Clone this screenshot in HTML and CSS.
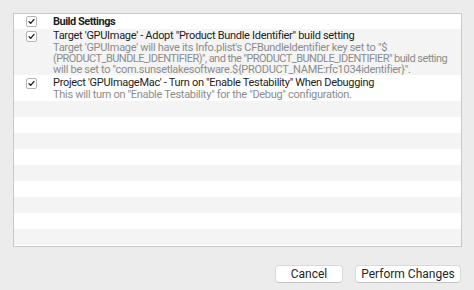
FILE: index.html
```html
<!DOCTYPE html>
<html>
<head>
<meta charset="utf-8">
<link rel="stylesheet" href="styles.css">
</head>
<body>
<div class="dialog">
  <div class="table">
    <div class="row row-header">
      <span class="check"><svg viewBox="0 0 11 11" width="11" height="11"><path d="M3 5.6 L4.7 7.4 L8 3.4" fill="none" stroke="#1a1a1a" stroke-width="1.3" stroke-linecap="round" stroke-linejoin="round"/></svg></span>
      <div class="text"><div class="title bold">Build Settings</div></div>
    </div>
    <div class="row row-alt row-big">
      <span class="check"><svg viewBox="0 0 11 11" width="11" height="11"><path d="M3 5.6 L4.7 7.4 L8 3.4" fill="none" stroke="#1a1a1a" stroke-width="1.3" stroke-linecap="round" stroke-linejoin="round"/></svg></span>
      <div class="text">
        <div class="title">Target 'GPUImage' - Adopt "Product Bundle Identifier" build setting</div>
        <div class="desc">Target 'GPUImage' will have its Info.plist's CFBundleIdentifier key set to "$</div>
        <div class="desc tight">(PRODUCT_BUNDLE_IDENTIFIER)", and the "PRODUCT_BUNDLE_IDENTIFIER" build setting</div>
        <div class="desc">will be set to "com.sunsetlakesoftware.${PRODUCT_NAME:rfc1034identifier}".</div>
      </div>
    </div>
    <div class="row row-mid">
      <span class="check"><svg viewBox="0 0 11 11" width="11" height="11"><path d="M3 5.6 L4.7 7.4 L8 3.4" fill="none" stroke="#1a1a1a" stroke-width="1.3" stroke-linecap="round" stroke-linejoin="round"/></svg></span>
      <div class="text">
        <div class="title">Project 'GPUImageMac' - Turn on "Enable Testability" When Debugging</div>
        <div class="desc">This will turn on "Enable Testability" for the "Debug" configuration.</div>
      </div>
    </div>
    <div class="filler"></div>
  </div>
  <div class="footer">
    <button class="btn btn-cancel">Cancel</button>
    <button class="btn btn-perform">Perform Changes</button>
  </div>
</div>
</body>
</html>
```
FILE: styles.css
```css
html, body {
  margin: 0;
  padding: 0;
  height: 100%;
}
body {
  background: #ececec;
  font-family: Roboto, "Liberation Sans", Arial, sans-serif;
  color: #262626;
}
.dialog {
  height: 290px;
  box-sizing: border-box;
  padding: 13px 12px 0 13px;
  display: flex;
  flex-direction: column;
}
.table {
  height: 234px;
  box-sizing: border-box;
  border: 1px solid #c9c9c9;
  background: #fff;
  display: flex;
  flex-direction: column;
  overflow: hidden;
}
.row {
  display: flex;
  align-items: flex-start;
  padding-left: 12px;
}
.row-header {
  height: 15px;
}
.row-header .check { margin-top: 2px; }
.row-header .title { line-height: 15px; }
.row-alt { background: #f4f4f4; }
.row-big {
  height: 46px;
  box-sizing: border-box;
  padding-top: 1px;
}
.row-mid {
  height: 26px;
  box-sizing: border-box;
  padding-top: 2px;
}
.check {
  flex: none;
  width: 9px;
  height: 9px;
  border: 1px solid #b5b5b5;
  border-radius: 2px;
  background: #fff;
  position: relative;
  margin-right: 16px;
  margin-top: 1px;
}
.check svg {
  position: absolute;
  left: -1px;
  top: -1px;
}
.text {
  font-size: 11px;
  letter-spacing: -0.3px;
  white-space: nowrap;
}
.title {
  line-height: 12px;
  color: #1e1e1e;
}
.bold {
  font-weight: bold;
  letter-spacing: -0.5px;
}
.desc {
  line-height: 11px;
  color: #8c8c8c;
}
.tight {
  letter-spacing: -0.55px;
}
.filler {
  flex: 1;
  background: repeating-linear-gradient(#f4f4f4 0 16px, #fff 16px 32px);
}
.footer {
  display: flex;
  justify-content: flex-end;
  gap: 12px;
  padding-top: 18px;
  padding-right: 1px;
}
.btn {
  height: 18px;
  box-sizing: border-box;
  background: #fff;
  border: 1px solid #d9d9d9;
  border-bottom-color: #c6c6c6;
  border-radius: 4px;
  font-family: Roboto, "Liberation Sans", Arial, sans-serif;
  font-size: 12px;
  color: #262626;
  padding: 0;
  line-height: 16px;
}
.btn-cancel { width: 68px; }
.btn-perform { width: 106px; }
```
